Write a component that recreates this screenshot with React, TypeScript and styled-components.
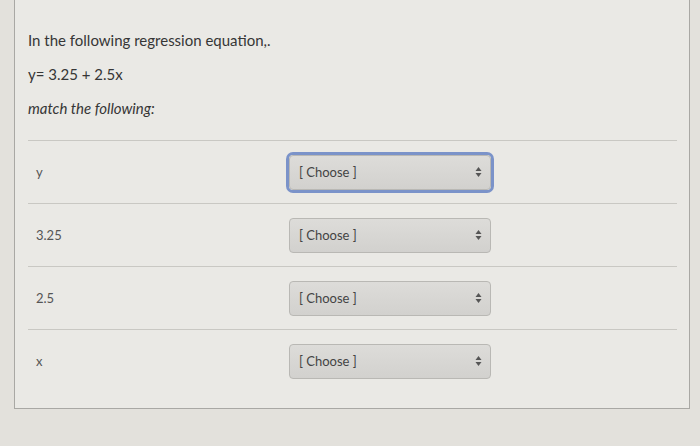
import styled, { createGlobalStyle } from "styled-components"

const GlobalStyle = createGlobalStyle`
    html, body {
        margin: 0;
        padding: 0;
        background: #e3e1dc;
    }
    body {
        font-family: Lato, "Open Sans", sans-serif;
        width: 700px;
        height: 446px;
        overflow: hidden;
    }
`

const rows = [
    { label: "y", focused: true },
    { label: "3.25", focused: false },
    { label: "2.5", focused: false },
    { label: "x", focused: false },
]

const Arrows = () => (
    <svg width="7" height="12" viewBox="0 0 7 12">
        <path d="M3.5 1 L6.5 5 L0.5 5 Z" fill="#555" />
        <path d="M3.5 11 L6.5 7 L0.5 7 Z" fill="#555" />
    </svg>
)

const App = () => {
    return (
        <Page>
            <GlobalStyle />
            <Card>
                <Question>
                    <p>In the following regression equation,.</p>
                    <p>y= 3.25 + 2.5x</p>
                    <p className="hint">match the following:</p>
                </Question>
                <Answers>
                    {rows.map((row) => (
                        <Row key={row.label}>
                            <div className="label">{row.label}</div>
                            <Select $focused={row.focused}>
                                <span>[ Choose ]</span>
                                <Arrows />
                            </Select>
                        </Row>
                    ))}
                </Answers>
            </Card>
        </Page>
    )
}

export default App

const Page = styled.div`
    width: 700px;
    height: 446px;
    padding: 0 10px 0 14px;
    box-sizing: border-box;
`

const Card = styled.div`
    height: 409px;
    box-sizing: border-box;
    background: #eae9e5;
    border: 1px solid #a9a8a4;
    border-top: none;
    padding: 32px 12px 0 13px;
`

const Question = styled.div`
    color: #363636;
    font-size: 15px;
    padding-bottom: 24px;
    border-bottom: 1px solid #c9c8c3;

    p {
        margin: 0 0 18px;
        line-height: 16px;
    }

    p:last-child {
        margin-bottom: 0;
    }

    .hint {
        font-style: italic;
    }
`

const Answers = styled.div`
    display: flex;
    flex-direction: column;
`

const Row = styled.div`
    height: 62px;
    display: flex;
    align-items: center;
    border-bottom: 1px solid #c9c8c3;
    padding-left: 8px;

    &:last-child {
        border-bottom: none;
    }

    .label {
        width: 253px;
        font-size: 13px;
        color: #555;
    }
`

const Select = styled.div<{ $focused: boolean }>`
    width: 202px;
    height: 35px;
    box-sizing: border-box;
    display: flex;
    align-items: center;
    justify-content: space-between;
    padding: 0 8px 0 9px;
    border-radius: 4px;
    background: linear-gradient(#dddcd9, #d2d1ce);
    border: 1px solid #b9b8b4;
    box-shadow: ${(p) => (p.$focused ? "0 0 0 3px #7b93c9" : "none")};
    font-size: 13px;
    color: #444;
`
